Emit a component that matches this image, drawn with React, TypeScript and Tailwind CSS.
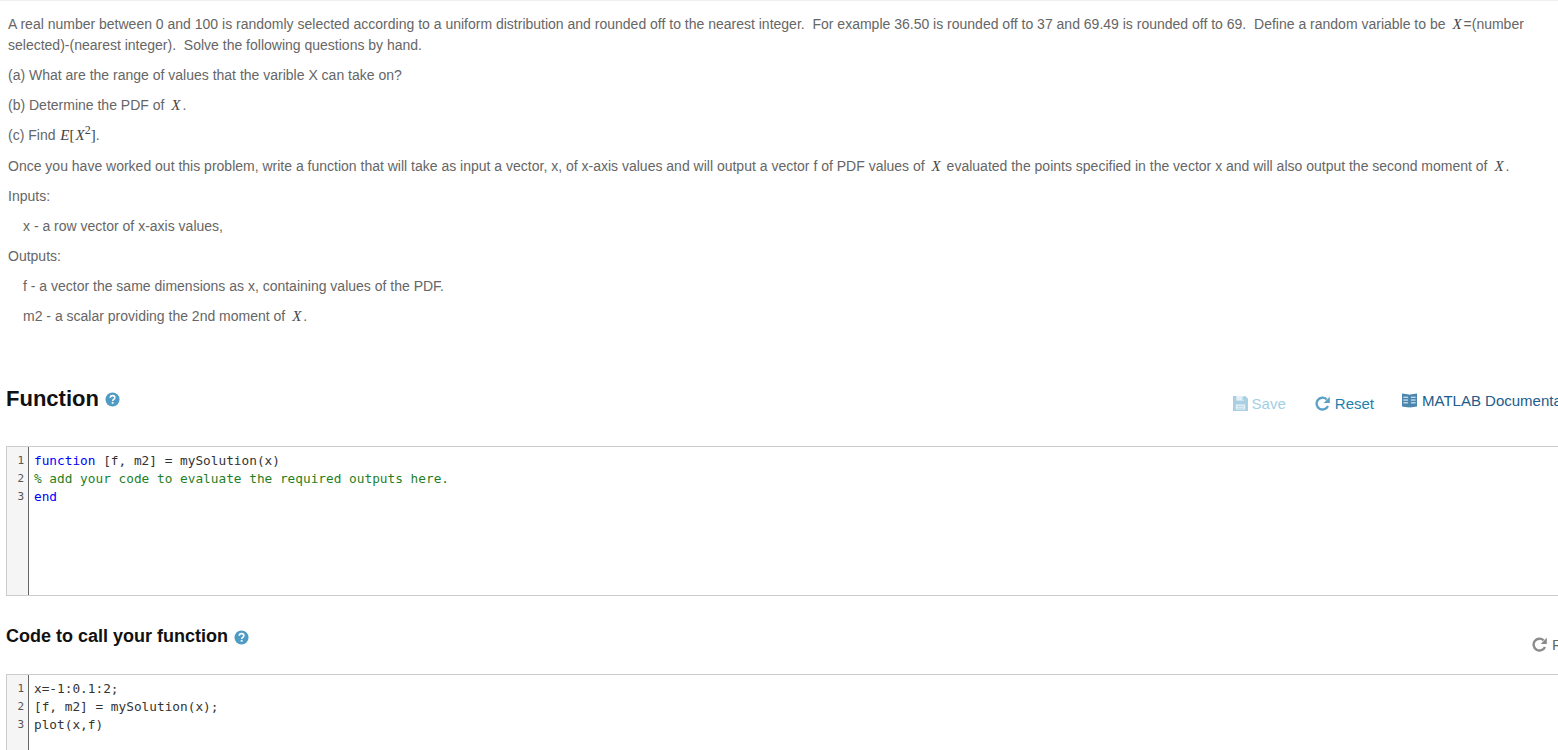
const mathVar = "font-['Liberation_Serif',serif] italic text-[15px] text-[#444]";
const mathText = "font-['Liberation_Serif',serif] text-[15px] text-[#444]";

function X() {
  return <span className={`${mathVar} mr-[2px] ml-[3px]`}>X</span>;
}

function Help() {
  return (
    <svg viewBox="0 0 16 16" className="h-[15px] w-[15px]">
      <circle cx="8" cy="8" r="7.5" fill="#4f9bc4" />
      <path d="M5.6 6.2c0-1.4 1.1-2.3 2.5-2.3s2.4.8 2.4 2.1c0 1.9-2.3 1.9-2.3 3.5" fill="none" stroke="#fff" strokeWidth="1.7" />
      <rect x="7.2" y="10.6" width="1.9" height="1.9" fill="#fff" />
    </svg>
  );
}

function ResetIcon({ color }: { color: string }) {
  return (
    <svg viewBox="0 0 16 16" className="h-[15px] w-[15px]">
      <path d="M13.8 10.6A6.3 6.3 0 1 1 12.4 3.6" fill="none" stroke={color} strokeWidth="2.5" />
      <path d="M15.8 0.8V7.4H9.2z" fill={color} />
    </svg>
  );
}

function Gutter({ count }: { count: number }) {
  return (
    <div className="w-[22px] shrink-0 border-r border-r-[#666] bg-[#f5f5f5] pt-[5px] pr-[4px] text-right text-[11px] text-[#555]">
      {Array.from({ length: count }, (_, i) => (
        <div key={i} className="h-[18px] leading-[18px]">{i + 1}</div>
      ))}
    </div>
  );
}

function Code({ children }: { children: React.ReactNode }) {
  return <div className="h-[18px] leading-[18px] whitespace-pre">{children}</div>;
}

export default function App() {
  return (
    <div className="h-[750px] w-[1558px] overflow-hidden border-t border-t-[#f0f0f0] bg-white font-['Liberation_Sans',sans-serif] text-[14px] leading-[21px] text-[#666]">
      <div className="px-2 pt-[13px]">
        <p className="mb-[9px] w-[1530px]">
          A real number between 0 and 100 is randomly selected according to a uniform distribution and rounded off to the nearest integer.&nbsp; For example 36.50 is rounded off to 37 and 69.49 is rounded off to 69.&nbsp; Define a random variable to be <X />=(number selected)-(nearest integer).&nbsp; Solve the following questions by hand.
        </p>
        <p className="mb-[9px]">(a) What are the range of values that the varible X can take on?</p>
        <p className="mb-[9px]">(b) Determine the PDF of <X />.</p>
        <p className="mb-[10px]">
          (c) Find <span className={`${mathVar} ml-[1px]`}>E</span>
          <span className={mathText}>[</span>
          <span className={`${mathVar} ml-[1px]`}>X</span>
          <sup className="font-['Liberation_Serif',serif] text-[12px] text-[#444]">2</sup>
          <span className={mathText}>]</span>.
        </p>
        <p className="mb-[9px] whitespace-nowrap">
          Once you have worked out this problem, write a function that will take as input a vector, x, of x-axis values and will output a vector f of PDF values of <X /> evaluated the points specified in the vector x and will also output the second moment of <X />.
        </p>
        <p className="mb-[9px]">Inputs:</p>
        <p className="mb-[9px] pl-[15px]">x - a row vector of x-axis values,</p>
        <p className="mb-[9px]">Outputs:</p>
        <p className="mb-[9px] pl-[15px]">f - a vector the same dimensions as x, containing values of the PDF.</p>
        <p className="pl-[15px]">m2 - a scalar providing the 2nd moment of <X />.</p>
      </div>

      <div className="mt-[54px] flex h-[36px] items-center pl-[6px]">
        <h2 className="text-[22px] leading-[28px] font-bold text-[#111]">Function</h2>
        <span className="ml-[6px]"><Help /></span>
        <div className="ml-auto flex translate-y-[4px] items-center text-[15px] whitespace-nowrap">
          <span className="flex items-center gap-[4px] text-[#a3cfe4]">
            <svg viewBox="0 0 16 16" className="h-[15px] w-[15px]">
              <path d="M0 0h13l3 3v13H0z" fill="#a9cfe3" />
              <rect x="3.5" y="0" width="8" height="5" fill="#e4f0f6" />
              <rect x="10" y="1" width="1.6" height="3" fill="#a9cfe3" />
              <rect x="3" y="9" width="10" height="5.5" fill="#e4f0f6" />
              <path d="M4.5 11h7M4.5 13h7" stroke="#a9cfe3" strokeWidth="0.8" />
            </svg>
            Save
          </span>
          <span className="ml-[29px] flex items-center gap-[5px] text-[#1f7fae]">
            <ResetIcon color="#5ba1c6" />
            Reset
          </span>
          <span className="ml-[28px] flex w-[156px] -translate-y-[3px] items-center gap-[5px] overflow-hidden text-[#215c8c]">
            <svg viewBox="0 0 16 16" className="h-[15px] w-[15px] shrink-0">
              <path d="M0 0.5l7.5 1 .5.5.5-.5 7.5-1V14.5l-7.5 1-.5-.5-.5.5-7.5-1z" fill="#4a86ae" />
              <path d="M1.5 4.5h5M1.5 7.5h5M1.5 10.5h5M9.5 4.5h5M9.5 7.5h5M9.5 10.5h5" stroke="#fff" strokeWidth="1" />
            </svg>
            MATLAB Documentation
          </span>
        </div>
      </div>

      <div className="mt-[29px] ml-[6px] flex h-[150px] border-y border-l border-[#ccc] font-['DejaVu_Sans_Mono',monospace] text-[12.77px] text-[#333]">
        <Gutter count={3} />
        <div className="bg-white pt-[5px] pl-[5px]">
          <Code><span className="text-[#0000ff]">function</span> [f, m2] = mySolution(x)</Code>
          <Code><span className="text-[#1f7f1f]">% add your code to evaluate the required outputs here.</span></Code>
          <Code><span className="text-[#0000ff]">end</span></Code>
        </div>
      </div>

      <div className="mt-[26px] flex h-[28px] items-center pl-[6px]">
        <h3 className="text-[18px] leading-[28px] font-bold text-[#111]">Code to call your function</h3>
        <span className="ml-[6px] translate-y-[1px]"><Help /></span>
        <div className="ml-auto flex w-[26px] translate-y-[8px] items-center gap-[5px] overflow-hidden text-[15px] whitespace-nowrap text-[#666]">
          <span className="shrink-0"><ResetIcon color="#8a8a8a" /></span>
          Reset
        </div>
      </div>

      <div className="mt-[24px] ml-[6px] flex h-[150px] border-y border-l border-[#ccc] font-['DejaVu_Sans_Mono',monospace] text-[12.77px] text-[#333]">
        <Gutter count={3} />
        <div className="bg-white pt-[5px] pl-[5px]">
          <Code>x=-1:0.1:2;</Code>
          <Code>[f, m2] = mySolution(x);</Code>
          <Code>plot(x,f)</Code>
        </div>
      </div>
    </div>
  );
}
